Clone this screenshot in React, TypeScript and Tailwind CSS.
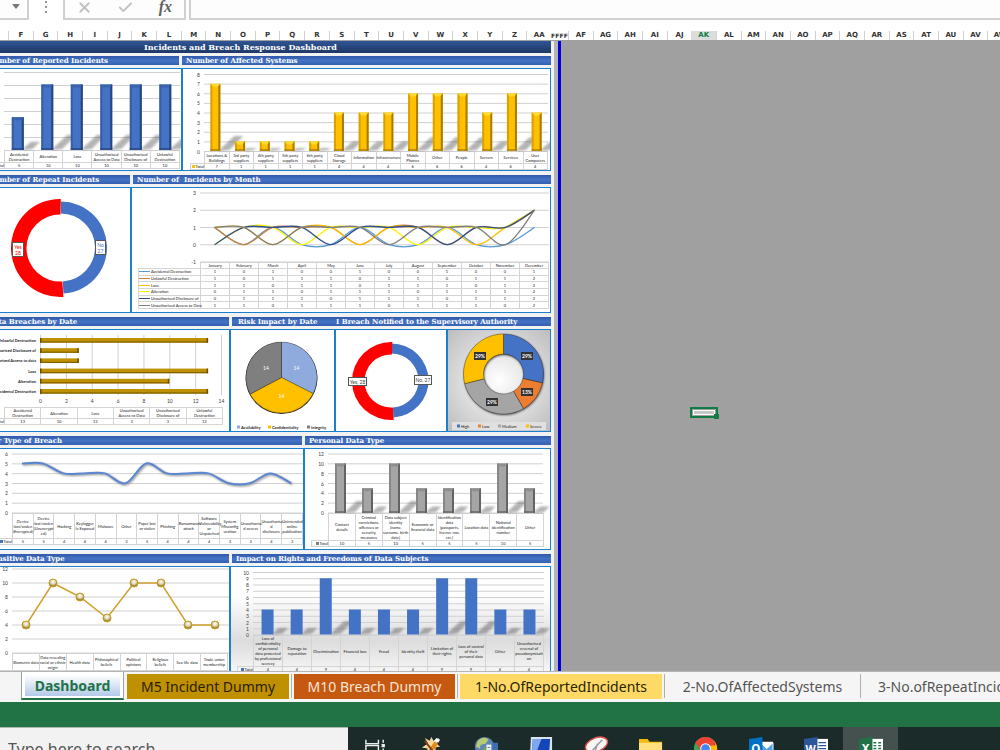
import type { ReactNode } from "react";
import { Check, X } from "lucide-react";

type Point = { x: number; y: number };

const DASHBOARD_COLUMNS = "F G H I J K L M N O P Q R S T U V W X Y Z AA".split(" ");
const SHEET_COLUMNS = "AF AG AH AI AJ AK AL AM AN AO AP AQ AR AS AT AU AV AW AX AY AZ".split(" ");

const BREACH_TYPES = [
  "Accidental Destruction",
  "Alteration",
  "Loss",
  "Unauthorised Access to Data",
  "Unauthorised Disclosure of",
  "Unlawful Destruction",
];

const SYSTEMS = [
  "Locations & Buildings",
  "3rd party suppliers",
  "4th party suppliers",
  "5th party suppliers",
  "6th party suppliers",
  "Cloud Storage",
  "Information",
  "Infrastructure",
  "Mobile Phones",
  "Other",
  "People",
  "Servers",
  "Services",
  "User Computers",
];

const MONTHS = [
  "January",
  "February",
  "March",
  "April",
  "May",
  "June",
  "July",
  "August",
  "September",
  "October",
  "November",
  "December",
];

const SERIES = [
  { name: "Accidental Destruction", color: "#5b9bd5", values: [1, 0, 1, 0, 0, 1, 0, 0, 1, 0, 0, 1] },
  { name: "Unlawful Destruction", color: "#d08030", values: [1, 0, 1, 1, 1, 0, 1, 1, 0, 1, 1, 2] },
  { name: "Loss", color: "#ffc000", values: [1, 1, 0, 1, 1, 0, 1, 1, 1, 0, 1, 2] },
  { name: "Alteration", color: "#fff200", values: [0, 1, 1, 0, 1, 1, 1, 0, 1, 1, 1, 2] },
  { name: "Unauthorised Disclosure of", color: "#2f4f8f", values: [0, 1, 1, 1, 0, 1, 1, 1, 0, 1, 1, 2] },
  { name: "Unauthorised Access to Data", color: "#7f7f7f", values: [1, 1, 0, 1, 1, 1, 0, 1, 1, 1, 0, 2] },
];

const BREACH_CAUSES = [
  "Device lost/stolen (Encrypted)",
  "Device lost/stolen (Unencrypt ed)",
  "Hacking",
  "Keylogger Is Exposed",
  "Malware",
  "Other",
  "Paper lost or stolen",
  "Phishing",
  "Ransomware attack",
  "Software Vulnerability or Unpatched",
  "System Misconfig uration",
  "Unauthorise d access",
  "Unauthorise d disclosure",
  "Unintended online publication",
];

const PERSONAL_DATA = [
  "Contact details",
  "Criminal convictions, offences or security measures",
  "Data subject identity (name, surname, birth date)",
  "Economic or financial data",
  "Identification data (passports, licence nos. etc.)",
  "Location data",
  "National identification number",
  "Other",
];

const SENSITIVE_DATA = [
  "Biometric data",
  "Data revealing racial or ethnic origin",
  "Health data",
  "Philosophical beliefs",
  "Political opinions",
  "Religious beliefs",
  "Sex life data",
  "Trade union membership",
];

const IMPACTS = [
  "Loss of confidentiality of personal data protected by professional secrecy",
  "Damage to reputation",
  "Discrimination",
  "Financial loss",
  "Fraud",
  "Identity theft",
  "Limitation of their rights",
  "Loss of control of their personal data",
  "Other",
  "Unauthorised reversal of pseudonymisati on",
];

function spline(points: Point[]) {
  let d = `M${points[0].x} ${points[0].y}`;
  for (let i = 0; i < points.length - 1; i++) {
    const p0 = points[Math.max(i - 1, 0)];
    const p1 = points[i];
    const p2 = points[i + 1];
    const p3 = points[Math.min(i + 2, points.length - 1)];
    d += ` C${p1.x + (p2.x - p0.x) / 6} ${p1.y + (p2.y - p0.y) / 6} ${p2.x - (p3.x - p1.x) / 6} ${p2.y - (p3.y - p1.y) / 6} ${p2.x} ${p2.y}`;
  }
  return d;
}

// ring segment, angles in degrees clockwise from the top; inner 0 gives a pie slice
function segment(cx: number, cy: number, outer: number, inner: number, from: number, to: number) {
  const at = (r: number, a: number) => {
    const rad = ((a - 90) * Math.PI) / 180;
    return `${cx + r * Math.cos(rad)} ${cy + r * Math.sin(rad)}`;
  };
  const large = to - from > 180 ? 1 : 0;
  return `M${at(outer, from)} A${outer} ${outer} 0 ${large} 1 ${at(outer, to)} L${at(inner, to)} A${inner} ${inner} 0 ${large} 0 ${at(inner, from)}Z`;
}

// Plots are drawn in sheet coordinates, so x and y are the corner of the view
function Plot({ x, y, w, h, title, children }: { x: number; y: number; w: number; h: number; title: string; children: ReactNode }) {
  return (
    <svg viewBox={`${x} ${y} ${w} ${h}`} width={w} height={h} role="img" aria-label={title} className="block shrink-0 overflow-visible">
      {children}
    </svg>
  );
}

function GridLines({ left, right, top, bottom, labels }: { left: number; right: number; top: number; bottom: number; labels: string[] }) {
  const step = (bottom - top) / (labels.length - 1);
  return (
    <g>
      {labels.map((label, i) => (
        <g key={label}>
          <line x1={left} x2={right} y1={top + i * step} y2={top + i * step} stroke="#d0d0d0" />
          <text x={left - 4} y={top + i * step + 2} fontSize="5" textAnchor="end" fill="#404040">
            {label}
          </text>
        </g>
      ))}
    </g>
  );
}

type BarsProps = {
  left: number;
  right: number;
  base: number;
  unit: number;
  width: number;
  values: number[];
  fill: string;
  light: string;
  dark: string;
  flat?: boolean;
};

function Bars({ left, right, base, unit, width, values, fill, light, dark, flat }: BarsProps) {
  const step = (right - left) / values.length;
  return (
    <g>
      {values.map((value, i) => {
        const h = value * unit;
        const x = left + step * (i + 0.5) - width / 2;
        const reach = Math.min(h * 0.22, 14);
        return (
          <g key={i}>
            <path
              d={`M${x + width} ${base} v-2 l${reach} ${1 - reach} h9 l${-reach} ${reach}Z`}
              fill="#444"
              opacity=".4"
              filter="url(#soft)"
            />
            <rect x={x} y={base - h} width={width} height={h} fill={fill} />
            {!flat && (
              <g>
                <rect x={x} y={base - h} width="2" height={h} fill={dark} opacity=".45" />
                <rect x={x + width - 2} y={base - h} width="2" height={h} fill={dark} />
                <path d={`M${x} ${base - h} h${width} l-3 3 h${6 - width}Z`} fill={light} />
                <rect x={x} y={base - 2} width={width} height="2" fill={dark} opacity=".7" />
              </g>
            )}
          </g>
        );
      })}
    </g>
  );
}

type DataTableProps = {
  labels: string[];
  values: number[];
  className: string;
  headClass: string;
  labelRow: string;
  swatch: string;
};

function DataTable({ labels, values, className, headClass, labelRow, swatch }: DataTableProps) {
  return (
    <table className={`table-fixed border-collapse text-center text-[4px] leading-[5px] text-[#202020] ${className}`}>
      <thead>
        <tr className={labelRow}>
          <td className={headClass}></td>
          {labels.map((label) => (
            <th key={label} scope="col" className="border border-[#d4d4d4] p-0 font-normal">
              {label}
            </th>
          ))}
        </tr>
      </thead>
      <tbody>
        <tr className="h-[6px]">
          <th scope="row" className="border border-[#d4d4d4] p-0 font-normal">
            <span className="flex items-center justify-end gap-px">
              <span className={`size-[3px] ${swatch}`}></span>
              Total
            </span>
          </th>
          {values.map((value, i) => (
            <td key={i} className="border border-[#d4d4d4] p-0">
              {value}
            </td>
          ))}
        </tr>
      </tbody>
    </table>
  );
}

function SectionTitle({ className, children }: { className: string; children: ReactNode }) {
  return (
    <h2
      className={`h-[9px] overflow-hidden bg-linear-to-b from-[#3059a8] via-[#4472c4] to-[#3560b2] font-[DejaVu_Serif,serif] text-[7px] leading-[9px] font-bold whitespace-nowrap text-white ${className}`}
    >
      {children}
    </h2>
  );
}

function Panel({ className, children }: { className: string; children: ReactNode }) {
  return <section className={`shrink-0 overflow-hidden border border-[#1b80cb] ${className}`}>{children}</section>;
}

function Row({ titles, className, children }: { titles: ReactNode; className: string; children: ReactNode }) {
  return (
    <div className="mb-1">
      <div className="mb-[3px] flex gap-[3px]">{titles}</div>
      <div className={`flex ${className}`}>{children}</div>
    </div>
  );
}

function Callout({ x, y, w, h, lines, color }: { x: number; y: number; w: number; h: number; lines: string[]; color: string }) {
  return (
    <g>
      <rect x={x} y={y} width={w} height={h} fill="#fff" stroke="#555" />
      {lines.map((line, i) => (
        <text key={line} x={x + w / 2} y={y + h / 2 + 2 + (i - (lines.length - 1) / 2) * 6} fontSize="5" textAnchor="middle" fill={color}>
          {line}
        </text>
      ))}
    </g>
  );
}

function MonthTable() {
  return (
    <table className="ml-[6px] h-[47px] w-[411px] table-fixed border-collapse text-center text-[4px] leading-[5px] text-[#202020]">
      <thead>
        <tr>
          <td className="w-[62px]"></td>
          {MONTHS.map((month) => (
            <th key={month} scope="col" className="border border-[#d4d4d4] p-0 font-normal">
              {month}
            </th>
          ))}
        </tr>
      </thead>
      <tbody>
        {SERIES.map((series) => (
          <tr key={series.name}>
            <th scope="row" className="border border-[#d4d4d4] p-0 font-normal">
              <span className="flex items-center gap-px whitespace-nowrap">
                <span className="h-px w-[11px] shrink-0" style={{ backgroundColor: series.color }}></span>
                {series.name}
              </span>
            </th>
            {series.values.map((value, i) => (
              <td key={i} className="border border-[#d4d4d4] p-0">
                {value}
              </td>
            ))}
          </tr>
        ))}
      </tbody>
    </table>
  );
}

function DateBars() {
  const rows = [
    { label: "Unlawful Destruction", value: 13 },
    { label: "Unauthorised Disclosure of", value: 3 },
    { label: "Unauthorised Access to data", value: 3 },
    { label: "Loss", value: 13 },
    { label: "Alteration", value: 10 },
    { label: "Accidental Destruction", value: 13 },
  ];
  return (
    <Plot x={-11} y={330} w={240} h={77} title="Data breaches by date">
      {[0, 2, 4, 6, 8, 10, 12, 14].map((tick) => (
        <g key={tick}>
          <line x1={40.5 + tick * 12.93} x2={40.5 + tick * 12.93} y1="335" y2="395" stroke="#d0d0d0" />
          <text x={40.5 + tick * 12.93} y="403" fontSize="5" textAnchor="middle" fill="#404040">
            {tick}
          </text>
        </g>
      ))}
      {rows.map((row, i) => (
        <g key={row.label}>
          <rect x="40" y={338 + i * 10.2} width={row.value * 12.93} height="4.6" fill="#bf9000" />
          <rect x="40" y={341.4 + i * 10.2} width={row.value * 12.93} height="1.2" fill="#806000" />
          <rect x="40" y={338 + i * 10.2} width="1.5" height="4.6" fill="#6b5000" />
          <rect x={38.5 + row.value * 12.93} y={338 + i * 10.2} width="1.5" height="4.6" fill="#6b5000" />
          <text x="36" y={342 + i * 10.2} fontSize="4" fontWeight="bold" textAnchor="end" fill="#202020">
            {row.label}
          </text>
        </g>
      ))}
    </Plot>
  );
}

function SeverityDonut() {
  const parts = [
    { name: "High", color: "#4472c4", from: 0, to: 103, label: "29%", x: 527, y: 356, key: 457 },
    { name: "Low", color: "#ed7d31", from: 103, to: 150, label: "13%", x: 527, y: 392, key: 478 },
    { name: "Medium", color: "#a5a5a5", from: 150, to: 256, label: "29%", x: 492, y: 402, key: 498 },
    { name: "Severe", color: "#ffc000", from: 256, to: 360, label: "29%", x: 480, y: 356, key: 526 },
  ];
  return (
    <Plot x={448} y={330} w={102} h={101} title="Breach severity">
      <defs>
        <radialGradient id="haze" r=".7">
          <stop offset="0" stopColor="#ffffff" />
          <stop offset="1" stopColor="#bdbdbd" />
        </radialGradient>
      </defs>
      <rect x="448" y="330" width="102" height="101" fill="url(#haze)" />
      <rect x="452" y="422" width="94" height="8" fill="#e0e0e0" />
      <path d={segment(504, 375, 40, 20, 0, 359.9)} fill="#444" filter="url(#soft)" />
      {parts.map((part) => (
        <g key={part.name}>
          <path d={segment(503.5, 374, 40, 20, part.from, part.to)} fill={part.color} stroke="#000" strokeOpacity=".3" />
          <rect x={part.x - 6} y={part.y - 4} width="12" height="8" fill="#333" />
          <text x={part.x} y={part.y + 2} fontSize="5" fontWeight="bold" textAnchor="middle" fill="#fff">
            {part.label}
          </text>
          <rect x={part.key} y="424.5" width="3" height="3" fill={part.color} />
          <text x={part.key + 4} y="428" fontSize="4" fill="#202020">
            {part.name}
          </text>
        </g>
      ))}
    </Plot>
  );
}

function RiskPie() {
  const parts = [
    { name: "Availability", color: "#8faadc", from: 0, to: 117, x: 296.5, y: 370, key: 237 },
    { name: "Confidentiality", color: "#ffc000", from: 117, to: 242, x: 281.5, y: 398, key: 268 },
    { name: "Integrity", color: "#7f7f7f", from: 242, to: 360, x: 266, y: 370, key: 307 },
  ];
  return (
    <Plot x={231} y={330} w={103} h={101} title="Risk impact">
      <circle cx="281.5" cy="378" r="36" fill="#333" />
      {parts.map((part) => (
        <g key={part.name}>
          <path d={segment(281.5, 377.5, 35.5, 0, part.from, part.to)} fill={part.color} stroke="#000" strokeOpacity=".25" />
          <rect x={part.key} y="425.5" width="3" height="3" fill={part.color} />
          <text x={part.key + 4} y="429" fontSize="4" fontWeight="bold" fill="#202020">
            {part.name}
          </text>
        </g>
      ))}
      {parts.map((part) => (
        <text key={part.name} x={part.x} y={part.y} fontSize="5" textAnchor="middle" fill="#fff">
          14
        </text>
      ))}
    </Plot>
  );
}

function Dashboard() {
  const causes = [5, 5, 4, 4, 4, 3, 5, 4, 4, 4, 3, 3, 4, 3];
  const sensitive = [4, 10, 8, 5, 10, 10, 4, 4];
  const sensitivePoints = sensitive.map((v, i) => ({ x: 26 + i * 27, y: 653 - v * 7 }));

  return (
    <div className="-ml-3 w-[563px] shrink-0 bg-[#f2f2f2] font-[Lato,sans-serif]">
      <h1 className="mb-[3px] h-3 bg-linear-to-b from-[#2f5597] to-[#1f3864] pl-[156px] font-[DejaVu_Serif,serif] text-[8px] leading-[12px] font-bold text-white">
        Incidents and Breach Response Dashboard
      </h1>

      <Row
        className="h-[103px]"
        titles={
          <>
            <SectionTitle className="w-[191px]">Number of Reported Incidents</SectionTitle>
            <SectionTitle className="flex-1 pl-1">Number of Affected Systems</SectionTitle>
          </>
        }
      >
        <Panel className="w-[194px] bg-white">
          <Plot x={-11} y={69} w={192} h={81} title="Number of reported incidents">
            <GridLines left={4} right={180} top={72.5} bottom={150.5} labels={["12", "10", "8", "6", "4", "2", "0"]} />
            <Bars left={3} right={180} base={150} unit={6.55} width={12} values={[5, 10, 10, 10, 10, 10]} fill="#4472c4" light="#3a62ad" dark="#27457f" />
          </Plot>
          <DataTable labels={BREACH_TYPES} values={[5, 10, 10, 10, 10, 10]} className="w-[191px]" headClass="w-[15px]" labelRow="h-[12px]" swatch="bg-[#4472c4]" />
        </Panel>
        <Panel className="w-[369px] bg-white">
          <Plot x={183} y={69} w={367} h={82} title="Number of affected systems">
            <GridLines left={204} right={548} top={74.5} bottom={151.5} labels={["8", "7", "6", "5", "4", "3", "2", "1", "0"]} />
            <Bars left={203} right={549} base={151} unit={9.6} width={10} values={[7, 1, 1, 1, 1, 4, 4, 4, 6, 6, 6, 4, 6, 4]} fill="#ffc000" light="#ffdc30" dark="#a87c00" />
          </Plot>
          <DataTable labels={SYSTEMS} values={[7, 1, 1, 1, 1, 4, 4, 4, 6, 6, 6, 4, 6, 4]} className="ml-[7px] w-[358px]" headClass="w-[14px]" labelRow="h-[12px]" swatch="bg-[#ffc000]" />
        </Panel>
      </Row>

      <Row
        className="h-[126px]"
        titles={
          <>
            <SectionTitle className="w-[142px]">Number of Repeat Incidents</SectionTitle>
            <SectionTitle className="flex-1 pl-1">Number of &nbsp;Incidents by Month</SectionTitle>
          </>
        }
      >
        <Panel className="w-[143px] bg-white">
          <Plot x={-11} y={188} w={141} h={124} title="Repeat incidents">
            <path d={segment(61, 247.5, 46, 34, 0, 177)} fill="#4472c4" />
            <path d={segment(60, 248, 49, 33.5, 176, 361)} fill="#ff0000" />
            <Callout x={12.5} y={242.5} w={11} h={14} lines={["Yes", "28"]} color="#ff0000" />
            <Callout x={95.5} y={240.5} w={10} h={14} lines={["No", "27"]} color="#4472c4" />
          </Plot>
        </Panel>
        <Panel className="w-[420px] bg-white">
          <Plot x={132} y={188} w={418} h={74} title="Incidents by month">
            <GridLines left={200} right={549} top={193} bottom={262} labels={["3", "2", "1", "0", "-1"]} />
            {SERIES.map((series) => (
              <path
                key={series.name}
                d={spline(series.values.map((v, i) => ({ x: 214.5 + i * 29.1, y: 244.7 - v * 17.3 })))}
                fill="none"
                stroke={series.color}
                strokeWidth="1.3"
              />
            ))}
          </Plot>
          <MonthTable />
        </Panel>
      </Row>

      <Row
        className="h-[103px]"
        titles={
          <>
            <SectionTitle className="w-[241px]">Data Breaches by Date</SectionTitle>
            <SectionTitle className="flex-1 pl-[6px]">
              <span className="inline-block w-[98px]">Risk Impact by Date</span>
              <span>I Breach Notified to the Supervisory Authority</span>
            </SectionTitle>
          </>
        }
      >
        <Panel className="w-[242px] bg-white">
          <DateBars />
          <DataTable labels={BREACH_TYPES} values={[13, 10, 13, 3, 3, 13]} className="w-[234px]" headClass="w-[15px]" labelRow="h-[11px]" swatch="bg-[#bf9000]" />
        </Panel>
        <Panel className="w-[105px] bg-white">
          <RiskPie />
        </Panel>
        <Panel className="w-[112px] bg-white">
          <Plot x={336} y={330} w={110} h={101} title="Breach notified">
            <path d={segment(391.5, 380.5, 37, 27, 0, 177)} fill="#4472c4" />
            <path d={segment(391, 381, 39, 26.5, 176, 362)} fill="#ff0000" />
            <Callout x={348.5} y={377.5} w={18} h={8} lines={["Yes, 28"]} color="#404040" />
            <Callout x={414.5} y={375.5} w={17} h={9} lines={["No, 27"]} color="#404040" />
          </Plot>
        </Panel>
        <Panel className="w-[104px] bg-[#d8d8d8]">
          <SeverityDonut />
        </Panel>
      </Row>

      <Row
        className="h-[102px]"
        titles={
          <>
            <SectionTitle className="w-[314px]">Per Type of Breach</SectionTitle>
            <SectionTitle className="flex-1 pl-1">Personal Data Type</SectionTitle>
          </>
        }
      >
        <Panel className="w-[316px] bg-white">
          <Plot x={-11} y={449} w={314} h={64} title="Breaches per type">
            <GridLines left={12} right={303} top={454} bottom={513} labels={["6", "5", "4", "3", "2", "1", "0"]} />
            <path d={spline(causes.map((v, i) => ({ x: 23 + i * 20.7, y: 514 - v * 9.9 })))} fill="none" stroke="#888" strokeWidth="2" filter="url(#soft)" />
            <path d={spline(causes.map((v, i) => ({ x: 22 + i * 20.7, y: 513 - v * 9.9 })))} fill="none" stroke="#5b86d0" strokeWidth="2" />
          </Plot>
          <DataTable labels={BREACH_CAUSES} values={causes} className="w-[314px]" headClass="w-[23px]" labelRow="h-[25px]" swatch="bg-[#4472c4]" />
        </Panel>
        <Panel className="w-[247px] bg-white">
          <Plot x={305} y={449} w={245} h={64} title="Personal data type">
            <GridLines left={328} right={543} top={454} bottom={513} labels={["12", "10", "8", "6", "4", "2", "0"]} />
            <Bars left={327} right={543} base={513} unit={4.95} width={11} values={[10, 5, 10, 5, 5, 5, 10, 5]} fill="#a5a5a5" light="#8f8f8f" dark="#636363" />
          </Plot>
          <DataTable labels={PERSONAL_DATA} values={[10, 5, 10, 5, 5, 5, 10, 5]} className="ml-[6px] w-[233px]" headClass="w-[17px]" labelRow="h-[27px]" swatch="bg-[#7f7f7f]" />
        </Panel>
      </Row>

      <Row
        className="h-[116px]"
        titles={
          <>
            <SectionTitle className="w-[241px]">Sensitive Data Type</SectionTitle>
            <SectionTitle className="flex-1 pl-1">Impact on Rights and Freedoms of Data Subjects</SectionTitle>
          </>
        }
      >
        <Panel className="w-[242px] bg-white">
          <Plot x={-11} y={567} w={240} h={86} title="Sensitive data type">
            <defs>
              <radialGradient id="bead" cy=".35">
                <stop offset="0" stopColor="#ffffff" />
                <stop offset=".6" stopColor="#dcd3b0" />
                <stop offset="1" stopColor="#a58a3a" />
              </radialGradient>
            </defs>
            <GridLines left={12} right={229} top={569} bottom={653} labels={["12", "10", "8", "6", "4", "2", "0"]} />
            <polyline points={sensitivePoints.map((p) => `${p.x},${p.y}`).join(" ")} fill="none" stroke="#d0a030" strokeWidth="1.5" />
            {sensitivePoints.map((p) => (
              <circle key={p.x} cx={p.x} cy={p.y} r="4" fill="url(#bead)" stroke="#c79a20" />
            ))}
          </Plot>
          <DataTable labels={SENSITIVE_DATA} values={sensitive} className="w-[239px]" headClass="w-[23px]" labelRow="h-[17px]" swatch="bg-[#bf9000]" />
        </Panel>
        <Panel className="w-[321px] bg-linear-to-b from-white from-25% via-[#dcdcdc] via-65% to-[#f4f4f4] to-90%">
          <Plot x={231} y={567} w={319} h={68} title="Impact on rights and freedoms">
            <GridLines left={253} right={544} top={572.5} bottom={635} labels={["10", "9", "8", "7", "6", "5", "4", "3", "2", "1", "0"]} />
            <Bars left={253} right={544} base={634.5} unit={6.25} width={12} values={[4, 4, 9, 4, 4, 4, 9, 9, 4, 4]} fill="#4472c4" light="#4472c4" dark="#2f5597" flat />
          </Plot>
          <DataTable labels={IMPACTS} values={[4, 4, 9, 4, 4, 4, 9, 9, 4, 4]} className="ml-[6px] w-[307px]" headClass="w-[16px]" labelRow="h-[31px]" swatch="bg-[#4472c4]" />
        </Panel>
      </Row>
    </div>
  );
}

function FormulaBar() {
  return (
    <div className="flex h-5 shrink-0">
      <button aria-label="Name box list" className="flex w-[29px] items-start justify-center border-r-2 border-b-2 border-[#d0d0d0] bg-[#fdfdfd] pt-1 pl-1">
        <svg width="8" height="5" viewBox="0 0 8 5">
          <path d="M0 0h8L4 5z" fill="#777" />
        </svg>
      </button>
      <div className="flex w-[34px] flex-col items-center gap-[3px] pt-px">
        <span className="size-[2px] bg-[#999]"></span>
        <span className="size-[2px] bg-[#999]"></span>
        <span className="size-[2px] bg-[#999]"></span>
      </div>
      <div className="flex w-[123px] items-start justify-between border-x-2 border-b-2 border-[#d0d0d0] bg-[#fdfdfd] pr-[12px] pl-[11px]">
        <button aria-label="Cancel" className="-mt-px text-[#c0c0c0]">
          <X size={17} strokeWidth={2.5} />
        </button>
        <button aria-label="Enter" className="-mt-px text-[#c0c0c0]">
          <Check size={17} strokeWidth={2.5} />
        </button>
        <button aria-label="Insert function" className="font-[Liberation_Serif,serif] text-base leading-[14px] font-bold text-[#606060] italic">
          fx
        </button>
      </div>
      <input aria-label="Formula" className="ml-[3px] min-w-0 flex-1 border-b-2 border-l-2 border-[#d0d0d0] bg-[#fdfdfd] outline-none" />
    </div>
  );
}

function ColumnHeaders() {
  return (
    <div className="mt-[11px] flex h-[10px] shrink-0 overflow-hidden border-b border-[#a0a0a0] pl-2 text-center font-[DejaVu_Sans,sans-serif] text-[7px] leading-[9px] font-bold text-[#333]">
      <div className="grid w-[543px] shrink-0 grid-cols-22">
        {DASHBOARD_COLUMNS.map((name) => (
          <span key={name} className="border-l border-[#d0d0d0]">
            {name}
          </span>
        ))}
      </div>
      <div className="grid w-[17px] shrink-0 grid-cols-4 text-[6px]">
        {["AB", "AC", "AD", "AE"].map((name) => (
          <span key={name} aria-label={name}>
            F
          </span>
        ))}
      </div>
      <div className="grid w-[518px] shrink-0 grid-cols-21">
        {SHEET_COLUMNS.map((name) => (
          <span key={name} className={name === "AK" ? "border-b-2 border-[#107c41] bg-[#dcdcdc] text-[#107c41]" : "border-l border-[#d0d0d0]"}>
            {name}
          </span>
        ))}
      </div>
    </div>
  );
}

function SheetTabs() {
  return (
    <nav className="flex h-[31px] shrink-0 items-start overflow-hidden border-t border-[#b5b5b5] bg-[#f5f5f5] pt-[2px] pl-[21px] font-[Noto_Sans,sans-serif] text-sm leading-6 whitespace-nowrap">
      <button className="-mt-[2px] h-7 w-[103px] shrink-0 border-x border-b-2 border-x-[#a0a0a0] border-b-[#217346] bg-white px-[3px] pt-[3px] pb-[2px] font-bold text-[#217346]">
        <span className="block h-[21px] bg-linear-to-b from-white to-[#b4cae8] leading-[22px]">Dashboard</span>
      </button>
      <button className="ml-[3px] h-[25px] w-[162px] shrink-0 bg-[#bf9000] text-[#2a2000]">M5 Incident Dummy</button>
      <span className="mx-[2px] h-6 w-px shrink-0 bg-[#b0b0b0]"></span>
      <button className="h-[25px] w-[161px] shrink-0 bg-[#c65911] text-[#fbe5d6]">M10 Breach Dummy</button>
      <span className="mx-[2px] h-6 w-px shrink-0 bg-[#b0b0b0]"></span>
      <button className="h-[25px] w-[202px] shrink-0 bg-[#ffd966] text-[#2a2400]">1-No.OfReportedIncidents</button>
      <span className="mx-[2px] h-6 w-px shrink-0 bg-[#b0b0b0]"></span>
      <button className="h-[25px] w-[191px] shrink-0 text-[#555]">2-No.OfAffectedSystems</button>
      <span className="mx-[2px] h-6 w-px shrink-0 bg-[#b0b0b0]"></span>
      <button className="h-[25px] shrink-0 px-[15px] text-[#555]">3-No.ofRepeatIncidents</button>
    </nav>
  );
}

const TASKBAR_ICONS = [
  {
    name: "Task View",
    art: (
      <g fill="none" stroke="#e8eeec" strokeWidth="1.5">
        <path d="M2 3v4h13V3M2 23v-5h13v5M2 9h13v7H2z" />
        <path d="M20 3v3M20 12v11" />
        <rect x="19" y="8" width="2" height="2" fill="#fff" />
      </g>
    ),
  },
  {
    name: "Editor",
    art: (
      <g>
        <path d="M9 6L6 1l5 3 2-4 2 4 6-3-3 6 4 3-5 1 1 8-5-6-6 7 2-8-6-1 6-4z" fill="#f5d9a0" />
        <path d="M4 22L16 5l4 2L8 24z" fill="#e88a1a" />
        <path d="M16 4l2-3 4 2-2 3z" fill="#fff" />
        <path d="M6 4l11 14" stroke="#7a4010" strokeWidth="2" />
      </g>
    ),
  },
  {
    name: "Remote",
    art: (
      <g>
        <circle cx="11" cy="10" r="10" fill="#5f86b8" />
        <path d="M4 4c4-4 9-4 11-1l-3 4-5 1-1 4-4-2z" fill="#b9c96f" />
        <path d="M9 12l5-3 3 4-3 6-4-1z" fill="#7a9c58" />
        <rect x="13" y="8" width="5" height="16" fill="#eef3f8" />
        <rect x="19" y="6" width="6" height="18" fill="#3f6fae" />
        <path d="M14 11h3M14 14h3" stroke="#5d88bd" />
      </g>
    ),
  },
  {
    name: "Computer",
    art: (
      <g>
        <path d="M2 0h22v19L1 21z" fill="#d7e3f2" />
        <path d="M4 2h18l-1 15-18 2z" fill="#1546b8" />
        <path d="M4 2h9L7 18l-4 1z" fill="#7fa6f0" />
        <path d="M8 21h9l2 3H6z" fill="#9fb2c8" />
      </g>
    ),
  },
  {
    name: "Snipping Tool",
    art: (
      <g>
        <ellipse cx="13" cy="8" rx="12" ry="7" transform="rotate(-22 13 8)" fill="#f7f5f5" stroke="#d9534a" strokeWidth="1.500" />
        <path d="M6 17L19 3M11 17l3-10" stroke="#999" strokeWidth="1.5" />
        <circle cx="6" cy="18" r="3" fill="none" stroke="#c43028" strokeWidth="2" />
        <circle cx="13" cy="19" r="3" fill="none" stroke="#c43028" strokeWidth="2" />
      </g>
    ),
  },
  {
    name: "File Explorer",
    art: (
      <g>
        <path d="M0 2h9l2 3h13v17H0z" fill="#f2b90f" />
        <path d="M0 6h24v16H0z" fill="#ffdf7e" />
        <path d="M5 15h14v7H5z" fill="#4a9de0" />
      </g>
    ),
  },
  {
    name: "Chrome",
    art: (
      <g>
        <circle cx="12" cy="12" r="12" fill="#34a853" />
        <path d="M1.600 6A12 12 0 0 1 22.400 6L12 12z" fill="#ea4335" />
        <path d="M22.400 6A12 12 0 0 1 12 24V12l2-6z" fill="#fbbc05" />
        <path d="M1.600 6h20.800v3H12l-5 6z" fill="#ea4335" />
        <circle cx="12" cy="12" r="5.500" fill="#fff" />
        <circle cx="12" cy="12" r="4.500" fill="#4285f4" />
      </g>
    ),
  },
  {
    name: "Outlook",
    art: (
      <g>
        <path d="M12 5h13v14H12z" fill="#fff" />
        <path d="M12 6l6.500 6L25 6v13H12z" fill="#4da3e4" stroke="#fff" />
        <path d="M0 2l14-2v24L0 22z" fill="#0072c6" />
        <text x="7" y="16.500" fontSize="12" fontWeight="bold" textAnchor="middle" fill="#fff">
          O
        </text>
      </g>
    ),
  },
  {
    name: "Word",
    art: (
      <g>
        <path d="M12 2h13v20H12z" fill="#fff" />
        <path d="M15 6h8M15 9h8M15 12h8M15 15h8M15 18h8" stroke="#2b579a" strokeWidth="1.300" />
        <path d="M0 2l14-2v24L0 22z" fill="#2b579a" />
        <text x="7" y="16.500" fontSize="11" fontWeight="bold" textAnchor="middle" fill="#fff">
          W
        </text>
      </g>
    ),
  },
  {
    name: "Excel",
    art: (
      <g>
        <path d="M12 2h13v20H12z" fill="#fff" />
        <path d="M15 6h3M20 6h3M15 9h3M20 9h3M15 12h3M20 12h3M15 15h3M20 15h3M15 18h3M20 18h3" stroke="#217346" strokeWidth="1.500" />
        <path d="M0 2l14-2v24L0 22z" fill="#217346" />
        <text x="7" y="16.500" fontSize="12" fontWeight="bold" textAnchor="middle" fill="#fff">
          X
        </text>
      </g>
    ),
  },
];

function Taskbar() {
  return (
    <footer className="flex h-[23px] shrink-0 items-start overflow-hidden bg-[#1a2b29] font-[Noto_Sans,sans-serif]">
      <input
        aria-label="Search"
        placeholder="Type here to search"
        className="h-[42px] w-[348px] shrink-0 border-t border-[#a8b8ae] bg-[#f2f2f2] px-2 text-base outline-none placeholder:text-[#555]"
      />
      {TASKBAR_ICONS.map((icon) => (
        <button
          key={icon.name}
          aria-label={icon.name}
          className={`flex h-[42px] w-[55px] shrink-0 items-center justify-center ${icon.name === "Excel" ? "bg-[#45514f]" : ""}`}
        >
          <svg width="26" height="25" viewBox="-1 -1 27 26">
            {icon.art}
          </svg>
        </button>
      ))}
    </footer>
  );
}

export default function App() {
  return (
    <div className="flex h-screen flex-col overflow-hidden bg-white font-[Noto_Sans,sans-serif]">
      <svg width="0" height="0" className="absolute" aria-hidden="true">
        <filter id="soft" x="-50%" y="-50%" width="200%" height="200%">
          <feGaussianBlur stdDeviation="1.2" />
        </filter>
      </svg>
      <FormulaBar />
      <ColumnHeaders />
      <main className="flex min-h-0 flex-1 overflow-hidden">
        <Dashboard />
        <div className="w-[3px] shrink-0 bg-[#f2f2f2]"></div>
        <div className="w-1 shrink-0 bg-[#b4b4b4]"></div>
        <div className="w-[3px] shrink-0 bg-[#0000d8]"></div>
        <div className="relative min-w-0 flex-1 bg-[#a0a0a0]">
          {/* active cell */}
          <div className="absolute top-[366px] left-[129px] h-[11px] w-7 border-2 border-[#107c41] bg-[#a0a0a0] p-px">
            <div className="h-full border border-white bg-[#c8c8c8]"></div>
            <span className="absolute -right-[3px] -bottom-[3px] size-[5px] bg-[#107c41]"></span>
          </div>
        </div>
      </main>
      <SheetTabs />
      <div className="h-[25px] shrink-0 bg-[#217346]"></div>
      <Taskbar />
    </div>
  );
}
